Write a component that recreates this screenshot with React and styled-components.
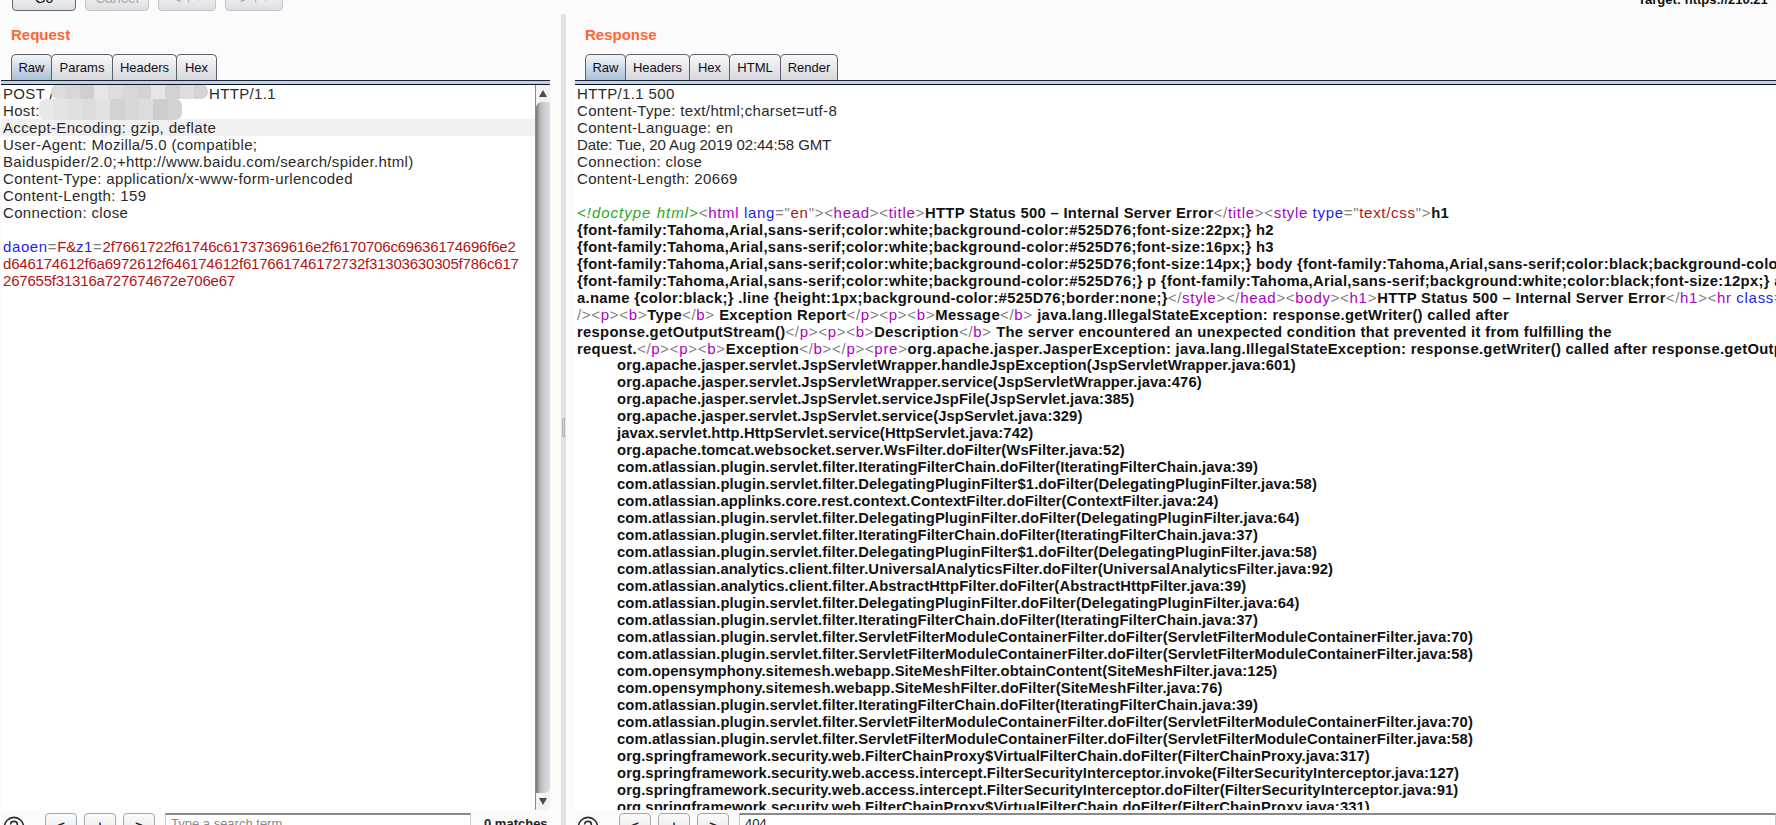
import React from 'react';
import styled, { createGlobalStyle } from 'styled-components';

const TEXT_FONT = '"Liberation Sans", Arial, sans-serif';

const GlobalStyle = createGlobalStyle`
    html, body {
        margin: 0;
        padding: 0;
        height: 825px;
        overflow: hidden;
        background: #fbfbfb;
        font-family: ${TEXT_FONT};
    }
`;

const requestHead = [
    'Accept-Encoding: gzip, deflate',
    'User-Agent: Mozilla/5.0 (compatible;',
    'Baiduspider/2.0;+http://www.baidu.com/search/spider.html)',
    'Content-Type: application/x-www-form-urlencoded',
    'Content-Length: 159',
    'Connection: close',
];

const responseHead = [
    'HTTP/1.1 500',
    'Content-Type: text/html;charset=utf-8',
    'Content-Language: en',
    'Date: Tue, 20 Aug 2019 02:44:58 GMT',
    'Connection: close',
    'Content-Length: 20669',
];

const htmlLines = [
    '<html lang="en"><head><title>HTTP Status 500 – Internal Server Error</title><style type="text/css">h1',
    '{font-family:Tahoma,Arial,sans-serif;color:white;background-color:#525D76;font-size:22px;} h2',
    '{font-family:Tahoma,Arial,sans-serif;color:white;background-color:#525D76;font-size:16px;} h3',
    '{font-family:Tahoma,Arial,sans-serif;color:white;background-color:#525D76;font-size:14px;} body {font-family:Tahoma,Arial,sans-serif;color:black;background-color:white;} b',
    '{font-family:Tahoma,Arial,sans-serif;color:white;background-color:#525D76;} p {font-family:Tahoma,Arial,sans-serif;background:white;color:black;font-size:12px;} a {color:black;}',
    'a.name {color:black;} .line {height:1px;background-color:#525D76;border:none;}</style></head><body><h1>HTTP Status 500 – Internal Server Error</h1><hr class="line"',
    '/><p><b>Type</b> Exception Report</p><p><b>Message</b> java.lang.IllegalStateException: response.getWriter() called after',
    'response.getOutputStream()</p><p><b>Description</b> The server encountered an unexpected condition that prevented it from fulfilling the',
    'request.</p><p><b>Exception</b></p><pre>org.apache.jasper.JasperException: java.lang.IllegalStateException: response.getWriter() called after response.getOutputStream()',
];

const stackLines = [
    'org.apache.jasper.servlet.JspServletWrapper.handleJspException(JspServletWrapper.java:601)',
    'org.apache.jasper.servlet.JspServletWrapper.service(JspServletWrapper.java:476)',
    'org.apache.jasper.servlet.JspServlet.serviceJspFile(JspServlet.java:385)',
    'org.apache.jasper.servlet.JspServlet.service(JspServlet.java:329)',
    'javax.servlet.http.HttpServlet.service(HttpServlet.java:742)',
    'org.apache.tomcat.websocket.server.WsFilter.doFilter(WsFilter.java:52)',
    'com.atlassian.plugin.servlet.filter.IteratingFilterChain.doFilter(IteratingFilterChain.java:39)',
    'com.atlassian.plugin.servlet.filter.DelegatingPluginFilter$1.doFilter(DelegatingPluginFilter.java:58)',
    'com.atlassian.applinks.core.rest.context.ContextFilter.doFilter(ContextFilter.java:24)',
    'com.atlassian.plugin.servlet.filter.DelegatingPluginFilter.doFilter(DelegatingPluginFilter.java:64)',
    'com.atlassian.plugin.servlet.filter.IteratingFilterChain.doFilter(IteratingFilterChain.java:37)',
    'com.atlassian.plugin.servlet.filter.DelegatingPluginFilter$1.doFilter(DelegatingPluginFilter.java:58)',
    'com.atlassian.analytics.client.filter.UniversalAnalyticsFilter.doFilter(UniversalAnalyticsFilter.java:92)',
    'com.atlassian.analytics.client.filter.AbstractHttpFilter.doFilter(AbstractHttpFilter.java:39)',
    'com.atlassian.plugin.servlet.filter.DelegatingPluginFilter.doFilter(DelegatingPluginFilter.java:64)',
    'com.atlassian.plugin.servlet.filter.IteratingFilterChain.doFilter(IteratingFilterChain.java:37)',
    'com.atlassian.plugin.servlet.filter.ServletFilterModuleContainerFilter.doFilter(ServletFilterModuleContainerFilter.java:70)',
    'com.atlassian.plugin.servlet.filter.ServletFilterModuleContainerFilter.doFilter(ServletFilterModuleContainerFilter.java:58)',
    'com.opensymphony.sitemesh.webapp.SiteMeshFilter.obtainContent(SiteMeshFilter.java:125)',
    'com.opensymphony.sitemesh.webapp.SiteMeshFilter.doFilter(SiteMeshFilter.java:76)',
    'com.atlassian.plugin.servlet.filter.IteratingFilterChain.doFilter(IteratingFilterChain.java:39)',
    'com.atlassian.plugin.servlet.filter.ServletFilterModuleContainerFilter.doFilter(ServletFilterModuleContainerFilter.java:70)',
    'com.atlassian.plugin.servlet.filter.ServletFilterModuleContainerFilter.doFilter(ServletFilterModuleContainerFilter.java:58)',
    'org.springframework.security.web.FilterChainProxy$VirtualFilterChain.doFilter(FilterChainProxy.java:317)',
    'org.springframework.security.web.access.intercept.FilterSecurityInterceptor.invoke(FilterSecurityInterceptor.java:127)',
    'org.springframework.security.web.access.intercept.FilterSecurityInterceptor.doFilter(FilterSecurityInterceptor.java:91)',
    'org.springframework.security.web.FilterChainProxy$VirtualFilterChain.doFilter(FilterChainProxy.java:331)',
];

const mosaicTop = ['#dcdcdc', '#d8d8d8', '#cfcfcf', '#e6e6e6', '#dedede', '#d8d8d8', '#d3d3d3', '#e6e6e6', '#d2d2d2', '#dedede', '#d5d5d5'];
const mosaicBottom = ['#e8e8e8', '#e4e4e4', '#e0e0e0', '#dcdcdc', '#e2e2e2', '#d2d2d2', '#d8d8d8', '#dcdcdc', '#cdcdcd', '#d2d2d2'];

// splits one line of html into coloured tags and bold text
const renderTag = (tag, key) => {
    const match = tag.match(/^<(\/?)([\w!]*)(.*?)(\/?>?)$/);
    const [, slash, name, attrs, close] = match;
    const attr = attrs.match(/^(\s+)([\w-]+)="([^"]*)"/);
    return (
        <React.Fragment key={key}>
            <Punct>{'<' + slash}</Punct>
            <TagName>{name}</TagName>
            {attr && (
                <>
                    {attr[1]}
                    <AttrName>{attr[2]}</AttrName>
                    <Punct>="</Punct>
                    <AttrValue>{attr[3]}</AttrValue>
                    <Punct>"</Punct>
                </>
            )}
            <Punct>{close}</Punct>
        </React.Fragment>
    );
};

const renderHtml = (line) =>
    line.split(/(<[^>]*>?|^\/>)/).filter(Boolean).map((part, i) => {
        if (part === '/>') return <Punct key={i}>/&gt;</Punct>;
        if (part.startsWith('<')) return renderTag(part, i);
        return <Bold key={i}>{part}</Bold>;
    });

const Help = () => (
    <HelpIcon viewBox="0 0 22 22">
        <circle cx="11" cy="11" r="9.6" fill="#fbfbfb" stroke="#2b2b2b" strokeWidth="1.6" />
        <path d="M7.6 8.6c0-2 1.5-3.2 3.4-3.2s3.4 1.2 3.4 3c0 2.600-3.400 2.600-3.400 5" fill="none" stroke="#2b2b2b" strokeWidth="1.6" />
    </HelpIcon>
);

const SearchBar = ({ value, placeholder }) => (
    <Footer>
        <Help />
        <FooterButtons>
            <FooterButton>&lt;</FooterButton>
            <FooterButton>+</FooterButton>
            <FooterButton>&gt;</FooterButton>
        </FooterButtons>
        <SearchInput $muted={!value}>{value || placeholder}</SearchInput>
        {!value && <Matches>0 matches</Matches>}
    </Footer>
);

const App = () => {
    return (
        <>
            <GlobalStyle />
            <Toolbar>
                <ToolButton>Go</ToolButton>
                <ToolButton $disabled $width={64}>Cancel</ToolButton>
                <HistoryButton>
                    <span>&lt;</span>
                    <i>|</i>
                    <i>▾</i>
                </HistoryButton>
                <HistoryButton>
                    <span>&gt;</span>
                    <i>|</i>
                    <i>▾</i>
                </HistoryButton>
                <TargetLabel>Target: https://210.21</TargetLabel>
            </Toolbar>
            <Panes>
                <RequestPane>
                    <PaneTitle>Request</PaneTitle>
                    <Tabs>
                        <Tab $active $width={41}>Raw</Tab>
                        <Tab $width={62}>Params</Tab>
                        <Tab $width={65}>Headers</Tab>
                        <Tab $width={41}>Hex</Tab>
                    </Tabs>
                    <TabLine />
                    <Editor>
                        <Code>
                            <Line>POST /<RedactedGap />HTTP/1.1</Line>
                            <Line>Host:</Line>
                            {requestHead.map((line, i) => (
                                <Line key={i} $highlight={i === 0}>{line}</Line>
                            ))}
                            <Line />
                            <Line>
                                <ParamName>daoen</ParamName>
                                <Punct>=</Punct>
                                <ParamValue>F&amp;</ParamValue>
                                <ParamName>z1</ParamName>
                                <Punct>=</Punct>
                                <ParamValue>2f7661722f61746c61737369616e2f6170706c69636174696f6e2</ParamValue>
                            </Line>
                            <Line><ParamValue>d646174612f6a6972612f646174612f617661746172732f31303630305f786c617</ParamValue></Line>
                            <Line><ParamValue>267655f31316a727674672e706e67</ParamValue></Line>
                            <Mosaic>
                                <MosaicRow $left={50} $height={15}>
                                    {mosaicTop.map((shade, i) => <MosaicCell key={i} $shade={shade} />)}
                                </MosaicRow>
                                <MosaicRow $left={38} $height={21}>
                                    {mosaicBottom.map((shade, i) => <MosaicCell key={i} $shade={shade} />)}
                                </MosaicRow>
                            </Mosaic>
                        </Code>
                        <ScrollBar>
                            <ScrollArrow $up />
                            <ScrollThumb />
                            <ScrollArrow />
                        </ScrollBar>
                    </Editor>
                    <SearchBar placeholder="Type a search term" />
                </RequestPane>
                <Splitter>
                    <Grip />
                </Splitter>
                <ResponsePane>
                    <PaneTitle>Response</PaneTitle>
                    <Tabs>
                        <Tab $active $width={41}>Raw</Tab>
                        <Tab $width={65}>Headers</Tab>
                        <Tab $width={41}>Hex</Tab>
                        <Tab $width={52}>HTML</Tab>
                        <Tab $width={58}>Render</Tab>
                    </Tabs>
                    <TabLine />
                    <ResponseCode>
                        {responseHead.map((line, i) => <Line key={i} $tight={i === 3}>{line}</Line>)}
                        <Line />
                        <Line>
                            <Doctype>&lt;!doctype html&gt;</Doctype>
                            {renderHtml(htmlLines[0])}
                        </Line>
                        {htmlLines.slice(1).map((line, i) => <Line key={i}>{renderHtml(line)}</Line>)}
                        {stackLines.map((line, i) => <StackLine key={i}>{line}</StackLine>)}
                    </ResponseCode>
                    <SearchBar value="404" />
                </ResponsePane>
            </Panes>
        </>
    );
};

export default App;

const Toolbar = styled.div`
    height: 11px;
    display: flex;
    align-items: flex-end;
    gap: 9px;
    padding-left: 12px;
    overflow: hidden;
    position: relative;
`;

const ToolButton = styled.div`
    flex: none;
    width: ${(p) => p.$width || 64}px;
    height: 24px;
    box-sizing: border-box;
    padding-top: 3px;
    border: 1px solid ${(p) => (p.$disabled ? '#c2c4c8' : '#63666c')};
    border-radius: 4px;
    background: linear-gradient(#fbfbfb, #dcdee3);
    color: ${(p) => (p.$disabled ? '#a8a8a8' : '#111')};
    font-size: 14px;
    text-align: center;
    line-height: 14px;
`;

const HistoryButton = styled(ToolButton).attrs({ $disabled: true, $width: 58 })`
    display: flex;
    justify-content: center;
    gap: 6px;
    span {
        font-weight: bold;
    }
    i {
        font-style: normal;
        font-size: 10px;
    }
`;

const TargetLabel = styled.div`
    position: absolute;
    left: 1638px;
    top: -8px;
    font-size: 13px;
    font-weight: bold;
    white-space: nowrap;
    color: #111;
`;

const Panes = styled.div`
    display: flex;
    height: 814px;
`;

const RequestPane = styled.section`
    width: 549px;
    margin-right: 11px;
    padding-left: 1px;
    display: flex;
    flex-direction: column;
    flex: none;
`;

const ResponsePane = styled.section`
    flex: 1;
    min-width: 0;
    padding-left: 9px;
    display: flex;
    flex-direction: column;
`;

const PaneTitle = styled.h2`
    flex: none;
    margin: 0 0 0 10px;
    height: 43px;
    box-sizing: border-box;
    padding-top: 16px;
    font-size: 15px;
    line-height: 16px;
    font-weight: bold;
    color: #ff6633;
`;

const Tabs = styled.div`
    flex: none;
    display: flex;
    margin-left: 10px;
    height: 26px;
`;

const Tab = styled.div`
    width: ${(p) => p.$width}px;
    box-sizing: border-box;
    border: 1px solid #5c6068;
    border-bottom: none;
    margin-right: -1px;
    border-radius: 5px 5px 0 0;
    background: ${(p) =>
        p.$active
            ? 'linear-gradient(#f4f5f7, #dfe5ec 30%, #a9c1d8)'
            : 'linear-gradient(#f8f8f9, #d6d8de)'};
    color: #10101c;
    font-size: 13px;
    line-height: 25px;
    text-align: center;
`;

const TabLine = styled.div`
    flex: none;
    height: 5px;
    box-sizing: border-box;
    border-top: 1px solid #1c2434;
    border-bottom: 1px solid #10141e;
    background: #bcd0e6;
`;

const Editor = styled.div`
    flex: none;
    height: 725px;
    display: flex;
    min-height: 0;
`;

const Code = styled.div`
    flex: 1;
    min-width: 0;
    position: relative;
    background: #fff;
    overflow: hidden;
`;

const ResponseCode = styled.div`
    flex: none;
    height: 725px;
    background: #fff;
    overflow: hidden;
`;

const Line = styled.div`
    height: 17px;
    line-height: 17px;
    padding-left: 2px;
    white-space: pre;
    font-size: 15px;
    letter-spacing: ${(p) => (p.$tight ? '-0.1px' : '0.35px')};
    color: #2a2a2a;
    background: ${(p) => (p.$highlight ? '#f0f0f0' : 'transparent')};
`;

const StackLine = styled(Line)`
    padding-left: 42px;
    font-size: 14.8px;
    letter-spacing: 0.1px;
    font-weight: bold;
    color: #111;
`;

const RedactedGap = styled.span`
    display: inline-block;
    width: 155px;
`;

const Punct = styled.span`
    letter-spacing: 0.7px;
    color: #808080;
`;

const TagName = styled.span`
    letter-spacing: 0.7px;
    color: #aa00c4;
`;

const AttrName = styled.span`
    letter-spacing: 0.7px;
    color: #1f1fe0;
`;

const AttrValue = styled.span`
    letter-spacing: 0.7px;
    color: #b01414;
`;

const Bold = styled.span`
    font-size: 14.8px;
    letter-spacing: 0.3px;
    font-weight: bold;
    color: #111;
`;

const Doctype = styled.span`
    font-style: italic;
    letter-spacing: 1px;
    color: #2aa52a;
`;

const ParamName = styled.span`
    letter-spacing: 0.6px;
    color: #1f1fe0;
`;

const ParamValue = styled.span`
    letter-spacing: -0.2px;
    color: #b01414;
`;

const Mosaic = styled.div`
    position: absolute;
    left: 0;
    top: -1px;
    filter: blur(0.6px);
`;

const MosaicRow = styled.div`
    display: flex;
    margin-left: ${(p) => p.$left}px;
    height: ${(p) => p.$height}px;
    border-radius: 7px;
    overflow: hidden;
    width: max-content;
`;

const MosaicCell = styled.div`
    width: 14.3px;
    background: ${(p) => p.$shade};
`;

const ScrollBar = styled.div`
    width: 15px;
    flex: none;
    display: flex;
    flex-direction: column;
    box-sizing: border-box;
    border-left: 1px solid #8a8a8a;
    background: #f2f2f2;
`;

const ScrollArrow = styled.div`
    height: 17px;
    flex: none;
    display: flex;
    align-items: center;
    justify-content: center;
    &::before {
        content: '';
        border-left: 4px solid transparent;
        border-right: 4px solid transparent;
        border-${(p) => (p.$up ? 'bottom' : 'top')}: 7px solid #4a4a4a;
    }
`;

const ScrollThumb = styled.div`
    flex: 1;
    border-radius: 6px 0 6px 0;
    background: linear-gradient(90deg, #767676, #b8b8bc 30%, #d2d3d8 70%, #dcdde2);
`;

const Splitter = styled.div`
    width: 5px;
    flex: none;
    margin-top: 3px;
    background: #dfe2e8;
    display: flex;
    align-items: center;
`;

const Grip = styled.div`
    width: 3px;
    height: 19px;
    margin: 0 1px;
    border: 1px solid #b4b8be;
    box-sizing: border-box;
    background: #cfd2d8;
    position: relative;
    top: 8px;
`;

const Footer = styled.div`
    flex: none;
    height: 15px;
    box-sizing: border-box;
    display: flex;
    align-items: flex-start;
    padding-top: 3px;
    overflow: hidden;
    position: relative;
`;

const HelpIcon = styled.svg`
    width: 22px;
    height: 22px;
    flex: none;
    margin: 3px 20px 0 2px;
`;

const FooterButtons = styled.div`
    display: flex;
    gap: 7px;
    margin-right: 10px;
    flex: none;
`;

const FooterButton = styled.div`
    width: 32px;
    height: 24px;
    flex: none;
    box-sizing: border-box;
    border: 1px solid #a4a8ae;
    border-radius: 4px;
    background: linear-gradient(#fafafa, #e6e8ec);
    font-size: 13px;
    font-weight: bold;
    line-height: 22px;
    padding-top: 1px;
    text-align: center;
    color: #222;
`;

const SearchInput = styled.div`
    flex: ${(p) => (p.$muted ? '0 0 306px' : '1')};
    height: 24px;
    box-sizing: border-box;
    border: 1px solid #c8c8c8;
    border-top: 2px solid #8a8a8a;
    background: #fff;
    padding-left: 5px;
    font-size: 13px;
    line-height: 18px;
    color: ${(p) => (p.$muted ? '#8a8a8a' : '#222')};
`;

const Matches = styled.div`
    margin-left: 13px;
    font-size: 13px;
    font-weight: bold;
    line-height: 22px;
    white-space: nowrap;
    color: #222;
`;
